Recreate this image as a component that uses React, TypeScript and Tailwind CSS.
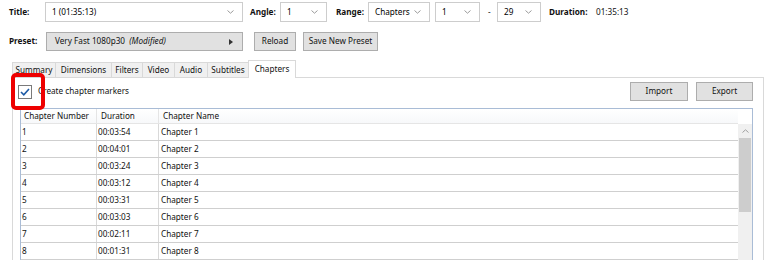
import React from "react";

function Chevron() {
  return (
    <svg width="7" height="4" viewBox="0 0 7 4" className="shrink-0">
      <path d="M0.5 0.5 L3.5 3.2 L6.5 0.5" fill="none" stroke="#9a9a9a" strokeWidth="1" />
    </svg>
  );
}

function Combo({ cls, text }: { cls: string; text: string }) {
  return (
    <div className={"h-[20px] border border-[#cdcdcd] bg-white flex items-center justify-between pl-[6px] pr-[8px] " + cls}>
      <span className="text-[#000]">{text}</span>
      <Chevron />
    </div>
  );
}

function Btn({ cls, children }: { cls: string; children: React.ReactNode }) {
  return (
    <div className={"h-[19px] border border-[#adadad] bg-[#e1e1e1] flex items-center " + cls}>
      {children}
    </div>
  );
}

const tabs = ["Summary", "Dimensions", "Filters", "Video", "Audio", "Subtitles"];
const tabW = ["w-[44px]", "w-[57px]", "w-[32px]", "w-[33px]", "w-[34px]", "w-[42px]"];

const rows = [
  ["1", "00:03:54", "Chapter 1"],
  ["2", "00:04:01", "Chapter 2"],
  ["3", "00:03:24", "Chapter 3"],
  ["4", "00:03:12", "Chapter 4"],
  ["5", "00:03:31", "Chapter 5"],
  ["6", "00:03:03", "Chapter 6"],
  ["7", "00:02:11", "Chapter 7"],
  ["8", "00:01:31", "Chapter 8"],
];

export default function App() {
  return (
    <div className="w-[768px] h-[260px] bg-white overflow-hidden relative font-['Noto_Sans','Open_Sans',sans-serif] text-[8.2px] text-[#111] leading-none whitespace-nowrap">
      {/* Row 1 */}
      <div className="flex items-center h-[20px] mt-[2px] pl-[9px]">
        <span className="font-bold w-[36px]">Title:</span>
        <Combo cls="w-[198px]" text="1  (01:35:13)" />
        <span className="font-bold ml-[7px] w-[30px]">Angle:</span>
        <Combo cls="w-[47px]" text="1" />
        <span className="font-bold ml-[9px] w-[32px]">Range:</span>
        <Combo cls="w-[62px]" text="Chapters" />
        <Combo cls="w-[45px] ml-[5px]" text="1" />
        <span className="ml-[8px] w-[9px]">-</span>
        <Combo cls="w-[44px]" text="29" />
        <span className="font-bold ml-[8px] w-[47px]">Duration:</span>
        <span>01:35:13</span>
      </div>

      {/* Row 2 */}
      <div className="flex items-center h-[19px] mt-[10px] pl-[9px]">
        <span className="font-bold w-[37px]">Preset:</span>
        <Btn cls="w-[197px] justify-between pl-[8px] pr-[9px]">
          <span>
            Very Fast 1080p30 <span className="italic ml-[2px]">(Modified)</span>
          </span>
          <svg width="4" height="6" viewBox="0 0 4 6">
            <path d="M0 0 L4 3 L0 6 Z" fill="#333" />
          </svg>
        </Btn>
        <Btn cls="w-[42px] ml-[11px] justify-center">Reload</Btn>
        <Btn cls="w-[75px] ml-[7px] justify-center">Save New Preset</Btn>
      </div>

      {/* Tabs */}
      <div className="flex items-end h-[17px] mt-[9px] pl-[12px]">
        {tabs.map((t, i) => (
          <div
            key={t}
            className={"h-[15px] border border-b-0 border-[#d9d9d9] bg-[#f0f0f0] flex items-center justify-center -mr-[1px] " + tabW[i]}
          >
            {t}
          </div>
        ))}
        <div className="h-[18px] -mb-[1px] relative z-10 border border-b-0 border-[#d9d9d9] bg-white w-[48px] flex items-center justify-center">
          Chapters
        </div>
      </div>

      {/* Panel */}
      <div className="ml-[12px] w-[752px] h-[200px] border border-[#d9d9d9] bg-white">
        <div className="flex items-center h-[17px] mt-[5px] pl-[5px] pr-[10px]">
          <div className="w-[14px] h-[14px] border border-[#7a7a7a] bg-white flex items-center justify-center">
            <svg width="10" height="8" viewBox="0 0 10 8">
              <path d="M1 4 L3.8 6.8 L9 1" fill="none" stroke="#1c5aa6" strokeWidth="1.6" />
            </svg>
          </div>
          <span className="ml-[6px]">Create chapter markers</span>
          <div className="flex-1" />
          <Btn cls="w-[58px] h-[18px] justify-center">Import</Btn>
          <Btn cls="w-[57px] h-[18px] ml-[8px] justify-center">Export</Btn>
        </div>

        {/* Grid */}
        <div className="ml-[7px] mr-[10px] mt-[8px] h-[160px] border border-[#a9bcd6] border-b-0 flex">
          <div className="flex-1 flex flex-col">
            <div className="h-[15px] flex border-b border-[#e5e5e5] bg-[linear-gradient(#ffffff,#f7f8fa)]">
              <div className="w-[76px] border-r border-[#e5e5e5] flex items-center pl-[3px]">Chapter Number</div>
              <div className="w-[62px] border-r border-[#e5e5e5] flex items-center pl-[4px]">Duration</div>
              <div className="flex-1 flex items-center pl-[4px]">Chapter Name</div>
            </div>
            {rows.map((r) => (
              <div key={r[0]} className="h-[17px] flex border-b border-[#cfcfcf]">
                <div className="w-[76px] border-r border-[#d9d9d9] flex items-center pl-[1px]">{r[0]}</div>
                <div className="w-[62px] border-r border-[#d9d9d9] flex items-center pl-[1px]">{r[1]}</div>
                <div className="flex-1 flex items-center pl-[2px]">{r[2]}</div>
              </div>
            ))}
          </div>
          {/* Scrollbar */}
          <div className="w-[14px] flex flex-col">
            <div className="h-[15px] bg-white" />
            <div className="flex-1 bg-[#f0f0f0] flex flex-col">
              <div className="h-[14px] flex items-center justify-center">
                <svg width="7" height="4" viewBox="0 0 7 4">
                  <path d="M0.5 3.5 L3.5 0.8 L6.5 3.5" fill="none" stroke="#a0a0a0" strokeWidth="1" />
                </svg>
              </div>
              <div className="mx-[1px] h-[74px] bg-[#cdcdcd]" />
            </div>
          </div>
        </div>
      </div>

      {/* Red highlight */}
      <div className="absolute left-[11px] top-[73px] w-[34px] h-[37px] border-[4px] border-[#ee0000] rounded-[5px]" />
    </div>
  );
}
